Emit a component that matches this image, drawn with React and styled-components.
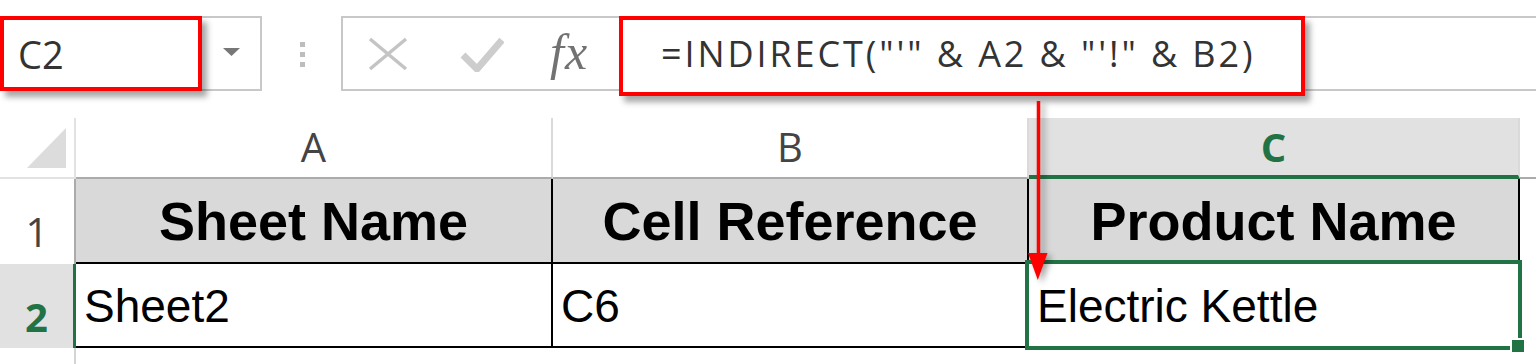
import React from "react";
import styled, { createGlobalStyle } from "styled-components";

const GlobalStyle = createGlobalStyle`
  html, body { margin: 0; padding: 0; background: #ffffff; }
  body { font-family: "Open Sans", "Liberation Sans", sans-serif; }
`;

const GREEN = "#217346";
const RED = "#ff0000";

const Page = styled.div`
  position: relative;
  width: 1536px;
  height: 364px;
  overflow: hidden;
  background: #ffffff;
`;

const Toolbar = styled.div`
  display: flex;
  align-items: flex-start;
  height: 118px;
  padding-top: 16px;
  box-sizing: border-box;
`;

const NameBox = styled.div`
  display: flex;
  flex: none;
  width: 262px;
  height: 75px;
  box-sizing: border-box;
  border: 2px solid #c8c8c8;
`;

const Highlight = styled.div`
  position: relative;
  z-index: 2;
  display: flex;
  align-items: center;
  flex: none;
  box-sizing: border-box;
  width: ${(p) => p.$width}px;
  margin: -2px 0 ${(p) => p.$bottom}px ${(p) => p.$left}px;
  padding-left: ${(p) => p.$pad}px;
  border: 4px solid ${RED};
  box-shadow: 5px 6px 6px rgba(0, 0, 0, 0.35);
  background: #ffffff;
`;

const NameText = styled.span`
  font-family: "Open Sans", sans-serif;
  font-size: 38px;
  color: #333333;
  line-height: 1;
`;

const DropButton = styled.div`
  flex: 1;
  display: flex;
  align-items: center;
  justify-content: center;
  padding-bottom: 4px;
`;

const Dots = styled.div`
  display: flex;
  flex-direction: column;
  gap: 5px;
  margin: 26px 36px 0 38px;
`;

const Dot = styled.span`
  width: 5px;
  height: 5px;
  background: #bdbdbd;
`;

const FormulaBar = styled.div`
  display: flex;
  flex: 1;
  height: 75px;
  margin-right: -40px;
  box-sizing: border-box;
  border: 2px solid #c8c8c8;
`;

const IconGroup = styled.div`
  display: flex;
  align-items: center;
  flex: none;
  width: 276px;
  padding-left: 25px;
  box-sizing: border-box;
`;

const IconSlot = styled.div`
  display: flex;
  align-items: center;
  margin-left: ${(p) => p.$gap || 0}px;
`;

const FxText = styled.span`
  font-family: "Liberation Serif", "DejaVu Serif", serif;
  font-style: italic;
  font-size: 50px;
  line-height: 1;
  color: #727272;
  letter-spacing: 1px;
  margin-top: -4px;
`;

const FormulaText = styled.span`
  font-family: "Open Sans", sans-serif;
  font-size: 36px;
  letter-spacing: 2.9px;
  color: #333333;
  line-height: 1;
  white-space: pre;
  margin-top: -4px;
`;

const ArrowOverlay = styled.svg`
  position: absolute;
  left: 1026px;
  top: 94px;
  z-index: 5;
  overflow: visible;
  filter: drop-shadow(4px 3px 3px rgba(0, 0, 0, 0.35));
`;

const Sheet = styled.div`
  display: grid;
  grid-template-columns: 76px 477px 476px 491px 1fr;
  grid-template-rows: 61px 85px 84px 1fr;
  height: 246px;
`;

const Corner = styled.div`
  display: flex;
  align-items: flex-end;
  justify-content: flex-end;
  box-sizing: border-box;
  padding: 0 8px 9px 0;
  border-right: 2px solid #e2e2e2;
  border-bottom: 2px solid #e2e2e2;
`;

const ColHeader = styled.div`
  display: flex;
  align-items: flex-end;
  justify-content: center;
  box-sizing: border-box;
  border-right: ${(p) => (p.$filler ? "none" : "2px solid #dadada")};
  border-bottom: ${(p) => (p.$selected ? `4px solid ${GREEN}` : "2px solid #ababab")};
  background: ${(p) => (p.$selected ? "#e1e1e1" : "#ffffff")};
  padding-bottom: ${(p) => (p.$selected ? 8 : 10)}px;
  font-family: "Open Sans", sans-serif;
  font-size: 40px;
  line-height: 1;
  font-weight: ${(p) => (p.$selected ? 700 : 400)};
  color: ${(p) => (p.$selected ? GREEN : "#444444")};
`;

const RowHeader = styled.div`
  display: flex;
  align-items: flex-end;
  justify-content: center;
  box-sizing: border-box;
  border-right: ${(p) => (p.$selected ? `3px solid ${GREEN}` : `2px solid ${p.$filler ? "#d4d4d4" : "#ababab"}`)};
  background: ${(p) => (p.$selected ? "#e1e1e1" : "#ffffff")};
  padding-bottom: ${(p) => p.$pb}px;
  font-family: "Open Sans", sans-serif;
  font-size: 40px;
  line-height: 1;
  font-weight: ${(p) => (p.$selected ? 700 : 400)};
  color: ${(p) => (p.$selected ? GREEN : "#444444")};
`;

const Cell = styled.div`
  position: relative;
  display: flex;
  align-items: flex-end;
  justify-content: ${(p) => (p.$header ? "center" : "flex-start")};
  box-sizing: border-box;
  border-right: 2px solid #000000;
  border-bottom: 2px solid #000000;
  background: ${(p) => (p.$header ? "#d9d9d9" : "#ffffff")};
  padding: 0 0 ${(p) => (p.$header ? 14 : 17)}px ${(p) => (p.$header ? 0 : 8)}px;
  font-family: "Liberation Sans", Arial, sans-serif;
  font-size: ${(p) => (p.$header ? 54 : 46)}px;
  font-weight: ${(p) => (p.$header ? 700 : 400)};
  line-height: 1;
  color: #000000;
  white-space: nowrap;
`;

const Blank = styled.div`
  background: #ffffff;
  grid-column: ${(p) => p.$span || "auto"};
`;

const SelectionFrame = styled.div`
  position: absolute;
  inset: -4px;
  border: 4px solid ${GREEN};
  pointer-events: none;
  z-index: 3;
`;

const FillHandle = styled.span`
  position: absolute;
  right: -8px;
  bottom: -8px;
  width: 12px;
  height: 12px;
  background: ${GREEN};
  border: 2px solid #ffffff;
`;

const CancelIcon = () => (
  <svg width="40" height="34" viewBox="0 0 40 34">
    <path d="M2 2 L38 32 M38 2 L2 32" stroke="#c4c4c4" strokeWidth="3.5" fill="none" />
  </svg>
);

const EnterIcon = () => (
  <svg width="44" height="36" viewBox="0 0 44 36">
    <path d="M3 19 L17 33 L42 4" stroke="#cdcdcd" strokeWidth="7" fill="none" />
  </svg>
);

const DropArrow = () => (
  <svg width="17" height="8" viewBox="0 0 17 8">
    <polygon points="0,0 17,0 8.5,8" fill="#777777" />
  </svg>
);

const CornerTriangle = () => (
  <svg width="39" height="40" viewBox="0 0 39 40">
    <polygon points="39,0 39,40 0,40" fill="#dcdcdc" />
  </svg>
);

export default function App() {
  return (
    <Page>
      <GlobalStyle />
      <Toolbar>
        <NameBox>
          <Highlight $width={202} $left={-2} $bottom={-2} $pad={14}>
            <NameText>C2</NameText>
          </Highlight>
          <DropButton>
            <DropArrow />
          </DropButton>
        </NameBox>
        <Dots>
          <Dot />
          <Dot />
          <Dot />
        </Dots>
        <FormulaBar>
          <IconGroup>
            <IconSlot>
              <CancelIcon />
            </IconSlot>
            <IconSlot $gap={52}>
              <EnterIcon />
            </IconSlot>
            <IconSlot $gap={46}>
              <FxText>fx</FxText>
            </IconSlot>
          </IconGroup>
          <Highlight $width={686} $left={0} $bottom={-7} $pad={38}>
            <FormulaText>{`=INDIRECT("'" & A2 & "'!" & B2)`}</FormulaText>
          </Highlight>
        </FormulaBar>
      </Toolbar>

      <Sheet>
        <Corner>
          <CornerTriangle />
        </Corner>
        <ColHeader>A</ColHeader>
        <ColHeader>B</ColHeader>
        <ColHeader $selected>C</ColHeader>
        <ColHeader $filler />

        <RowHeader $pb={12}>1</RowHeader>
        <Cell $header>Sheet Name</Cell>
        <Cell $header>Cell Reference</Cell>
        <Cell $header>Product Name</Cell>
        <Blank />

        <RowHeader $selected $pb={11}>2</RowHeader>
        <Cell>Sheet2</Cell>
        <Cell>C6</Cell>
        <Cell>
          Electric Kettle
          <SelectionFrame>
            <FillHandle />
          </SelectionFrame>
        </Cell>
        <Blank />

        <RowHeader $filler $pb={0} />
        <Blank $span="2 / 6" />
      </Sheet>

      <ArrowOverlay width="26" height="192" viewBox="0 0 26 192">
        <line x1="12.5" y1="7" x2="12.5" y2="162" stroke={RED} strokeWidth="3.5" />
        <polygon points="2,159 21.5,159 11.8,186" fill={RED} />
      </ArrowOverlay>
    </Page>
  );
}
